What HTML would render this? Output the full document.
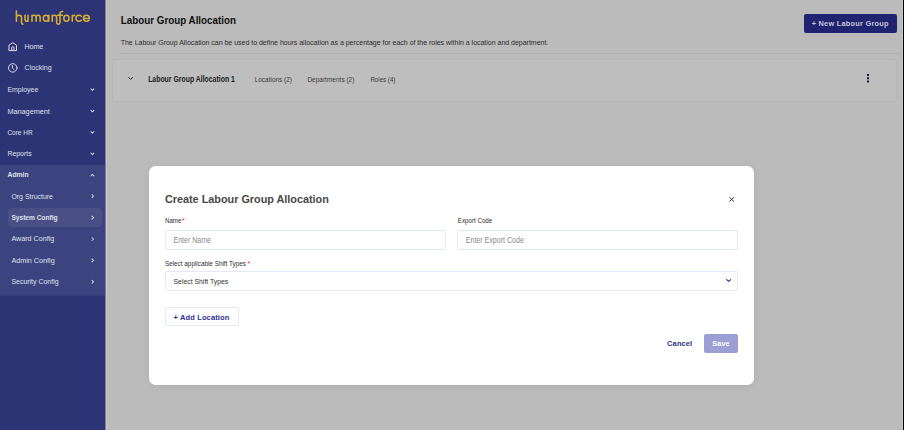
<!DOCTYPE html>
<html><head><meta charset="utf-8">
<style>
*{margin:0;padding:0;box-sizing:border-box}
html,body{width:904px;height:430px;overflow:hidden;font-family:"Liberation Sans",sans-serif}
body{position:relative;background:#bbbbbb}
.a{position:absolute}
.t{position:absolute;white-space:nowrap;line-height:1;transform-origin:0 0}
#rblack{position:absolute;left:903px;top:0;width:1px;height:430px;background:#000}
#rblack2{position:absolute;left:902px;top:0;width:1px;height:430px;background:#c9c9c9}

</style></head>
<body>
<div class="a" style="left:0;top:0;width:105px;height:430px;background:#2d3475"></div>
<div class="a" style="left:0;top:165px;width:105px;height:130px;background:#3c437f"></div>
<div class="a" style="left:0;top:295px;width:105px;height:1px;background:#373e7b"></div>
<div class="a" style="left:8px;top:208px;width:93.7px;height:19px;background:#4a5086;border-radius:3.5px"></div>
<div class="a" style="left:105px;top:0;width:1px;height:430px;background:#7a7f9c"></div>
<div class="a" style="left:106px;top:0;width:1px;height:430px;background:#c8c8c6"></div>
<svg class="a" style="left:0;top:0" width="105" height="30" viewBox="0 0 105 30">
<g fill="none" stroke="#d8b031" stroke-width="1.55" stroke-linecap="round" stroke-linejoin="round">
<path d="M16.4,10.9 V21.3 M16.4,17.6 C16.4,16.1 17.5,15.3 19,15.3 C20.5,15.3 21.5,16.2 21.5,17.6 V22.6 Q21.5,23.9 22.8,24.3"/>
<path d="M25,15.3 V19 C25,20.5 25.8,21.3 26.6,21.3 C27.5,21.3 28,20.5 28,19 M28,15.3 V21.3"/>
<path d="M32,15.3 V21.3 M32,17.4 C32,16.1 32.9,15.3 34,15.3 C35.2,15.3 36.1,16.1 36.1,17.4 V21.3 M36.1,17.4 C36.1,16.1 37,15.3 38.1,15.3 C39.2,15.3 40.1,16.1 40.1,17.4 V21.3"/>
<ellipse cx="45.9" cy="18.3" rx="2.6" ry="3.0"/>
<path d="M48.7,15.3 V21.3"/>
<path d="M52.2,15.3 V21.3 M52.2,17.4 C52.2,16.1 53.2,15.3 54.4,15.3 C55.6,15.3 56.6,16.1 56.6,17.4 V22.6 C56.6,23.6 57.3,24.3 58.3,24.3 C59.3,24.3 60,23.6 60,22.6 V13.2 C60,12.1 60.8,11.5 62.6,11.4 M57.6,15.3 H62.4"/>
<ellipse cx="66.4" cy="18.3" rx="2.6" ry="3.0"/>
<path d="M72.3,15.3 V21.3 M72.3,17.6 C72.3,16.1 73.2,15.3 74.7,15.3"/>
<path d="M81.3,16.3 C80.8,15.6 80,15.3 79,15.3 C77.1,15.3 76,16.6 76,18.3 C76,20 77.1,21.3 79,21.3 C80,21.3 80.8,21 81.3,20.3"/>
<path d="M83.5,18.5 H89.3 C89.3,16.6 88,15.3 86.4,15.3 C84.6,15.3 83.5,16.6 83.5,18.3 C83.5,20 84.6,21.3 86.4,21.3 C87.5,21.3 88.4,20.9 89,20.3"/>
</g>
</svg>
<!-- main -->
<div class="a" style="left:804px;top:14px;width:93px;height:19px;background:#1f2370;border-radius:2px"></div>
<div class="a" style="left:121px;top:53px;width:782px;height:1px;background:#aeaeae"></div>
<div class="a" style="left:112px;top:59px;width:785px;height:43px;border:1px solid #b5b5b5;border-radius:3px;background:#bebebe"></div>
<!-- modal -->
<div class="a" style="left:149px;top:166px;width:605px;height:219px;background:#fff;border-radius:6.5px;box-shadow:0 1px 8px rgba(0,0,0,0.07)"></div>
<div class="a" style="left:165px;top:230px;width:281px;height:20px;border:1px solid #e4e9f9;border-radius:2px"></div>
<div class="a" style="left:457px;top:230px;width:281px;height:20px;border:1px solid #e4e9f9;border-radius:2px"></div>
<div class="a" style="left:165px;top:270.5px;width:573px;height:20.5px;border:1px solid #e4e9f9;border-radius:2px"></div>
<div class="a" style="left:165px;top:307px;width:73.5px;height:18.5px;border:1px solid #e4e9f9;border-radius:2px"></div>
<div class="a" style="left:704px;top:333.5px;width:33.5px;height:19px;background:#9b9fd4;border-radius:2px"></div>
<!-- icons -->
<svg class="a" style="left:0;top:0" width="904" height="430" viewBox="0 0 904 430">
<g fill="none" stroke="#dcdde8" stroke-width="1" stroke-linecap="round" stroke-linejoin="round">
<path d="M8.9,50.2 V45.3 L12.75,42.6 L16.5,45.3 V50.2 Z"/>
<path d="M11.7,50.2 V47.8 C11.7,47.1 12.2,46.7 12.85,46.7 C13.5,46.7 14,47.1 14,47.8 V50.2"/>
<circle cx="12.75" cy="67.9" r="4.25"/>
<path d="M12.4,65.5 V68.1 L14.1,69.6" stroke-width="1"/>
</g>
<g fill="none" stroke="#cbcddc" stroke-width="1.05" stroke-linecap="round" stroke-linejoin="round">
<path d="M90.9,88.9 L92.4,90.4 L93.9,88.9"/>
<path d="M90.9,110.3 L92.4,111.8 L93.9,110.3"/>
<path d="M90.9,131.7 L92.4,133.2 L93.9,131.7"/>
<path d="M90.9,153.1 L92.4,154.6 L93.9,153.1"/>
<path d="M90.9,175.9 L92.4,174.4 L93.9,175.9"/>
<path d="M92.0,194.7 L93.5,196.2 L92.0,197.7"/>
<path d="M92.0,216.1 L93.5,217.6 L92.0,219.1"/>
<path d="M92.0,237.5 L93.5,239.0 L92.0,240.5"/>
<path d="M92.0,258.9 L93.5,260.4 L92.0,261.9"/>
<path d="M92.0,280.3 L93.5,281.8 L92.0,283.3"/>
</g>
<path d="M128.6,77.4 L130.6,79.4 L132.6,77.4" fill="none" stroke="#2a2a2a" stroke-width="1" stroke-linecap="round" stroke-linejoin="round"/>
<g fill="#10143a"><rect x="867" y="74" width="2" height="2" rx="0.3"/><rect x="867" y="77.2" width="2" height="2" rx="0.3"/><rect x="867" y="80.4" width="2" height="2" rx="0.3"/></g>
<path d="M729.7,197.5 L733.7,201.3 M733.7,197.5 L729.7,201.3" fill="none" stroke="#2c3166" stroke-width="1.0" stroke-linecap="round"/>
<path d="M726.7,279.6 L728.7,281.4 L730.7,279.6" fill="none" stroke="#2a2f90" stroke-width="1.1" stroke-linecap="round" stroke-linejoin="round"/>
</svg>

<svg class="a" style="left:0;top:0" width="904" height="430" font-family="Liberation Sans">
<text x="24.43" y="49" font-size="6.83" font-weight="normal" fill="#dfe0ea" textLength="18.85" lengthAdjust="spacingAndGlyphs">Home</text>
<text x="24.62" y="70" font-size="7.12" font-weight="normal" fill="#dfe0ea" textLength="26.97" lengthAdjust="spacingAndGlyphs">Clocking</text>
<text x="7.42" y="92" font-size="7.12" font-weight="normal" fill="#dfe0ea" textLength="30.87" lengthAdjust="spacingAndGlyphs">Employee</text>
<text x="7.42" y="114" font-size="7.12" font-weight="normal" fill="#dfe0ea" textLength="42.47" lengthAdjust="spacingAndGlyphs">Management</text>
<text x="7.42" y="135" font-size="7.12" font-weight="normal" fill="#dfe0ea" textLength="25.27" lengthAdjust="spacingAndGlyphs">Core HR</text>
<text x="7.52" y="156" font-size="7.12" font-weight="normal" fill="#dfe0ea" textLength="24.07" lengthAdjust="spacingAndGlyphs">Reports</text>
<text x="7.52" y="177" font-size="7.12" font-weight="bold" fill="#dfe0ea" textLength="21.07" lengthAdjust="spacingAndGlyphs">Admin</text>
<text x="11.42" y="199" font-size="7.12" font-weight="normal" fill="#dfe0ea" textLength="41.57" lengthAdjust="spacingAndGlyphs">Org Structure</text>
<text x="11.42" y="220" font-size="7.12" font-weight="bold" fill="#dfe0ea" textLength="46.17" lengthAdjust="spacingAndGlyphs">System Config</text>
<text x="11.42" y="241" font-size="7.12" font-weight="normal" fill="#dfe0ea" textLength="42.87" lengthAdjust="spacingAndGlyphs">Award Config</text>
<text x="11.42" y="263" font-size="7.12" font-weight="normal" fill="#dfe0ea" textLength="43.27" lengthAdjust="spacingAndGlyphs">Admin Config</text>
<text x="11.42" y="284" font-size="7.12" font-weight="normal" fill="#dfe0ea" textLength="47.17" lengthAdjust="spacingAndGlyphs">Security Config</text>
<text x="120.85" y="24" font-size="11.19" font-weight="bold" fill="#0f0f0f" textLength="115.10" lengthAdjust="spacingAndGlyphs">Labour Group Allocation</text>
<text x="120.70" y="45" font-size="7.41" font-weight="normal" fill="#2b2b2b" textLength="427.59" lengthAdjust="spacingAndGlyphs">The Labour Group Allocation can be used to define hours allocation as a percentage for each of the roles within a location and department.</text>
<text x="811.71" y="26" font-size="7.35" font-weight="bold" fill="#c5c6d8" textLength="76.79" lengthAdjust="spacing">+ New Labour Group</text>
<text x="148.16" y="82" font-size="8.58" font-weight="bold" fill="#1c1c1c" textLength="86.69" lengthAdjust="spacingAndGlyphs">Labour Group Allocation 1</text>
<text x="254.70" y="82" font-size="7.56" font-weight="normal" fill="#3a3a3a" textLength="37.30" lengthAdjust="spacingAndGlyphs">Locations (2)</text>
<text x="307.40" y="82" font-size="7.56" font-weight="normal" fill="#3a3a3a" textLength="47.00" lengthAdjust="spacingAndGlyphs">Departments (2)</text>
<text x="370.40" y="82" font-size="7.56" font-weight="normal" fill="#3a3a3a" textLength="25.00" lengthAdjust="spacingAndGlyphs">Roles (4)</text>
<text x="164.93" y="203" font-size="11.77" font-weight="bold" fill="#474747" textLength="163.94" lengthAdjust="spacingAndGlyphs">Create Labour Group Allocation</text>
<text x="164.94" y="223" font-size="6.54" font-weight="normal" fill="#2e2e2e" textLength="16.52" lengthAdjust="spacingAndGlyphs">Name</text>
<text x="181.74" y="223" font-size="6.54" font-weight="normal" fill="#e04040" textLength="3.12" lengthAdjust="spacingAndGlyphs">*</text>
<text x="457.74" y="223" font-size="6.54" font-weight="normal" fill="#2e2e2e" textLength="34.52" lengthAdjust="spacingAndGlyphs">Export Code</text>
<text x="173.47" y="243" font-size="8.28" font-weight="normal" fill="#8a8a8a" textLength="37.56" lengthAdjust="spacingAndGlyphs">Enter Name</text>
<text x="465.77" y="243" font-size="8.28" font-weight="normal" fill="#8a8a8a" textLength="58.06" lengthAdjust="spacingAndGlyphs">Enter Export Code</text>
<text x="164.93" y="266" font-size="6.69" font-weight="normal" fill="#2e2e2e" textLength="81.03" lengthAdjust="spacingAndGlyphs">Select applicable Shift Types</text>
<text x="247.33" y="266" font-size="6.69" font-weight="normal" fill="#e04040" textLength="3.13" lengthAdjust="spacingAndGlyphs">*</text>
<text x="173.49" y="284" font-size="7.70" font-weight="normal" fill="#333333" textLength="54.82" lengthAdjust="spacingAndGlyphs">Select Shift Types</text>
<text x="173.50" y="320" font-size="7.49" font-weight="bold" fill="#2e3192" textLength="55.90" lengthAdjust="spacing">+ Add Location</text>
<text x="667.10" y="346" font-size="7.49" font-weight="bold" fill="#2c3380" textLength="25.10" lengthAdjust="spacing">Cancel</text>
<text x="712.31" y="346" font-size="7.22" font-weight="bold" fill="#ffffff" textLength="17.28" lengthAdjust="spacing">Save</text>
</svg>
<div id="rblack2"></div>
<div id="rblack"></div>
</body></html>
